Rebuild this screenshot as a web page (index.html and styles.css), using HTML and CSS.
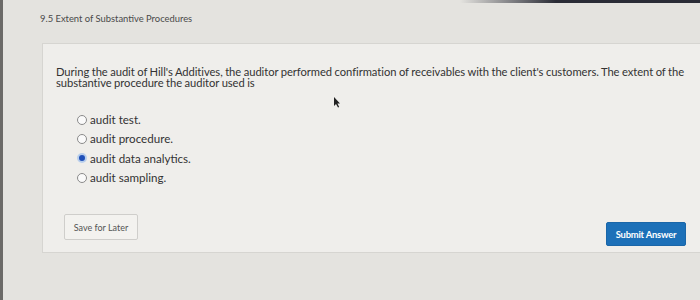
FILE: index.html
```html
<!DOCTYPE html>
<html>
<head>
<meta charset="utf-8">
<link rel="stylesheet" href="styles.css">
</head>
<body>
<div class="edge"></div>
<div class="topshade"></div>
<main class="page">
  <h1 class="title">9.5 Extent of Substantive Procedures</h1>
  <section class="card">
    <p class="question">During the audit of Hill's Additives, the auditor performed confirmation of receivables with the client's customers. The extent of the substantive procedure the auditor used is</p>
    <ul class="options">
      <li class="option"><span class="radio"></span>audit test.</li>
      <li class="option"><span class="radio"></span>audit procedure.</li>
      <li class="option"><span class="radio checked"></span>audit data analytics.</li>
      <li class="option"><span class="radio"></span>audit sampling.</li>
    </ul>
    <div class="actions">
      <button class="btn save">Save for Later</button>
      <button class="btn submit">Submit Answer</button>
    </div>
  </section>
</main>
<svg class="cursor" width="8" height="12" viewBox="0 0 8 12"><path d="M1 1 L1 10 L3 8 L5 11.5 L6.2 11 L4.4 7.6 L7 7.4 Z" fill="#222"/></svg>
</body>
</html>
```
FILE: styles.css
```css
html, body {
  margin: 0;
  padding: 0;
  width: 700px;
  height: 300px;
  overflow: hidden;
}
body {
  background: #e4e3df;
  font-family: Lato, "Liberation Sans", sans-serif;
  color: #3a3a3a;
  position: relative;
}
.edge {
  position: absolute;
  left: 0; top: 0; bottom: 0;
  width: 3px;
  background: #6b6a68;
}
.topshade {
  position: absolute;
  top: 0; right: 0;
  width: 240px;
  height: 3px;
  background: linear-gradient(to right, rgba(40,40,50,0), #2a2c36 40%);
}
.page {
  padding: 13px 0 0 40px;
}
.title {
  margin: 0;
  font-size: 9.4px;
  font-weight: 400;
  color: #4a4a4a;
  line-height: 12px;
}
.card {
  margin: 18px 0 0 2px;
  background: #efeeeb;
  border: 1px solid #d6d5d1;
  border-right: none;
  height: 210px;
  box-sizing: border-box;
  padding: 22px 10px 0 13px;
}
.question {
  margin: 0;
  font-size: 11.2px;
  line-height: 11px;
  color: #333;
  letter-spacing: -0.05px;
  word-spacing: -0.3px;
}
.options {
  list-style: none;
  margin: 22px 0 0 21px;
  padding: 0;
}
.option {
  display: flex;
  align-items: center;
  gap: 3px;
  height: 19.3px;
  font-size: 11.6px;
  color: #333;
}
.radio {
  width: 10px;
  height: 10px;
  border: 1px solid #8a8a8a;
  border-radius: 50%;
  background: #fafafa;
  box-sizing: border-box;
  position: relative;
}
.radio.checked {
  border: 2px solid #b9cfec;
  background: #1f4fb8;
}
.actions {
  display: flex;
  justify-content: space-between;
  align-items: flex-start;
  margin-top: 27px;
  padding-right: 4px;
}
.btn {
  font-family: Lato, "Liberation Sans", sans-serif;
  font-size: 9px;
  border-radius: 2px;
  cursor: pointer;
}
.save {
  margin-left: 8px;
  width: 74px;
  height: 26px;
  background: #f3f2ef;
  border: 1px solid #cfcecb;
  color: #555;
}
.submit {
  margin-top: 8px;
  width: 80px;
  height: 24px;
  background: #1c70b8;
  border: 1px solid #1a66a8;
  color: #fff;
  font-size: 9.4px;
  font-weight: 700;
  letter-spacing: -0.2px;
}
.cursor {
  position: absolute;
  left: 333px;
  top: 96px;
}
```
